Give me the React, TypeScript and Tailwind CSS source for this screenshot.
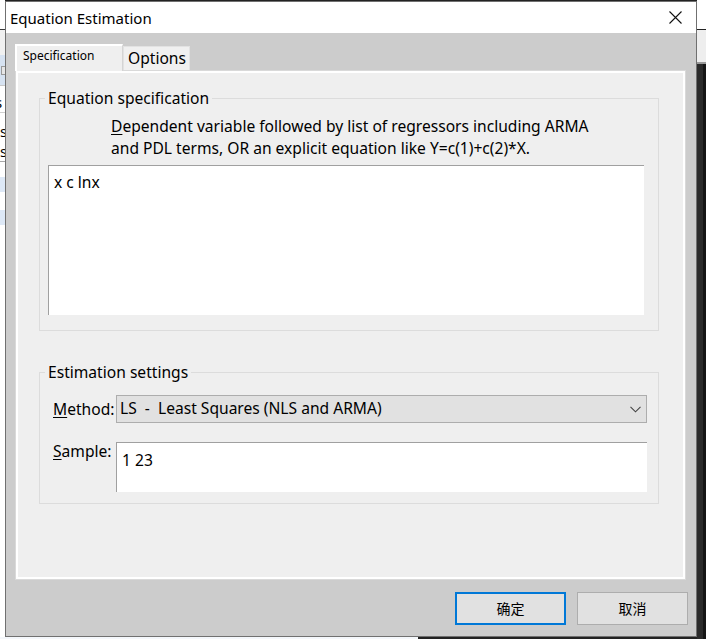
// Background windows peeking out on the left edge
function LeftBackdrop() {
    return (
        <div className="absolute left-0 top-0 w-[5px] h-[637px] bg-white overflow-hidden flex flex-col">
            <div className="h-[29px] bg-white" />
            <div className="h-[1px] bg-[#3a3a3a]" />
            <div className="h-[25px] bg-[#f0f0f0]" />
            <div className="h-[30px] bg-[#d6e2f1] pt-[11px]">
                <div className="ml-[1px] w-[8px] h-[9px] border border-[#9a9a9a] bg-[#e6e6e6]" />
            </div>
            <div className="h-[1px] bg-[#c8c8c8]" />
            <div className="h-[6px] bg-white" />
            <div className="h-[20px] -ml-[5px] text-[15px] leading-[20px] whitespace-nowrap">s</div>
            <div className="h-[1px] bg-[#d0d0d0]" />
            <div className="h-[8px] bg-white" />
            <div className="h-[20px] -ml-[9px] text-[15px] leading-[20px] whitespace-nowrap">os</div>
            <div className="h-[20px] -ml-[9px] text-[15px] leading-[20px] whitespace-nowrap">os</div>
            <div className="h-[1px] bg-[#a8a8a8]" />
            <div className="h-[15px] bg-white" />
            <div className="h-[15px] bg-[#dde8f6]" />
            <div className="h-[18px] bg-white" />
            <div className="h-[15px] bg-[#dde8f6]" />
            <div className="flex-1 bg-white" />
        </div>
    );
}

function RightBackdrop() {
    return (
        <div className="absolute left-[697px] top-0 w-[9px] h-[639px] flex flex-col">
            <div className="h-[29px] bg-white" />
            <div className="h-[1px] bg-[#222222]" />
            <div className="h-[32px] bg-[#eeeeee]" />
            <div className="h-[2px] bg-[#9a9a9a]" />
            <div className="flex-1 flex">
                <div className="w-[6px] bg-[#2b2b2b]" />
                <div className="flex-1 bg-[#161616]" />
            </div>
        </div>
    );
}

function GroupBox({ title, className, children }: { title: string; className: string; children: React.ReactNode }) {
    return (
        <div className={`relative w-[620px] border border-[#dcdcdc] ${className}`}>
            <div className="absolute -top-[11px] left-[5px] bg-[#efefef] px-[3px] text-[15.6px] leading-[20px]">{title}</div>
            {children}
        </div>
    );
}

export default function App() {
    return (
        <div className="relative w-[706px] h-[639px] overflow-hidden bg-[#222222] text-black font-['Noto_Sans','Noto_Sans_CJK_SC',sans-serif]">
            <LeftBackdrop />
            <RightBackdrop />
            <div className="absolute left-0 top-[637px] h-[2px] w-[418px] bg-[#f4f7fb]" />

            {/* Dialog window */}
            <div className="absolute left-[5px] top-[1px] w-[692px] h-[636px] border border-[#707070] bg-[#cccccc] flex flex-col">
                {/* Title bar */}
                <div className="h-[31px] bg-white flex items-center justify-between pl-[4px] pr-[14px]">
                    <span className="text-[15px] leading-[20px]">Equation Estimation</span>
                    <svg width="13" height="13" viewBox="0 0 13 13" className="text-[#111]">
                        <path d="M0.5 0.5 L12.5 12.5 M12.5 0.5 L0.5 12.5" stroke="currentColor" strokeWidth="1.1" fill="none" />
                    </svg>
                </div>

                <div className="flex-1 flex flex-col pl-[9px] pr-[8px] pt-[11px] pb-[10px]">
                    {/* Tabs */}
                    <div className="flex items-end h-[26px]">
                        <div className="h-[27px] w-[108px] -mb-[1px] relative z-10 bg-[#efefef] border-t-2 border-l-2 border-white border-r border-r-[#d4d4d4] pl-[6px] pt-[2px] text-[12px] leading-[16px]">
                            Specification
                        </div>
                        <div className="h-[24px] w-[67px] bg-[#f0f0f0] border border-b-0 border-[#e2e2e2] pl-[4px] pt-[1px] text-[15.6px] leading-[20px]">
                            Options
                        </div>
                    </div>

                    {/* Tab panel */}
                    <div className="w-[671px] h-[510px] border border-[#d9d9d9]">
                        <div className="h-full border-2 border-white bg-[#efefef] pl-[21px] pt-[25px]">
                            <GroupBox title="Equation specification" className="h-[233px] pt-[16px]">
                                <div className="pl-[71px] text-[15.6px] leading-[22px]">
                                    <div><span className="underline underline-offset-2">D</span>ependent variable followed by list of regressors including ARMA</div>
                                    <div>and PDL terms, OR an explicit equation like Y=c(1)+c(2)*X.</div>
                                </div>
                                <div className="ml-[8px] mt-[6px] w-[596px] h-[150px] bg-white border-t border-l border-[#a0a0a0] pl-[5px] pt-[5px] text-[15.6px] leading-[22px]">
                                    x c lnx
                                </div>
                            </GroupBox>

                            <GroupBox title="Estimation settings" className="mt-[41px] h-[132px] pt-[22px] pl-[13px]">
                                <div className="flex items-center">
                                    <div className="w-[63px] text-[15.6px] leading-[20px] whitespace-nowrap">
                                        <span className="underline underline-offset-2">M</span>ethod:
                                    </div>
                                    <div className="w-[531px] h-[28px] border border-[#adadad] bg-[#e1e1e1] flex items-center justify-between pl-[3px] pr-[5px] text-[15.6px]">
                                        <span className="whitespace-pre">LS  -  Least Squares (NLS and ARMA)</span>
                                        <svg width="11" height="7" viewBox="0 0 11 7" className="text-[#444]">
                                            <path d="M0.5 0.8 L5.5 5.8 L10.5 0.8" stroke="currentColor" strokeWidth="1.1" fill="none" />
                                        </svg>
                                    </div>
                                </div>
                                <div className="mt-[19px] flex items-start">
                                    <div className="w-[63px] -mt-[1px] text-[15.6px] leading-[20px] whitespace-nowrap">
                                        <span className="underline underline-offset-2">S</span>ample:
                                    </div>
                                    <div className="w-[531px] h-[50px] bg-white border-t border-l border-[#a0a0a0] pl-[5px] pt-[6px] text-[15.6px] leading-[22px]">
                                        1 23
                                    </div>
                                </div>
                            </GroupBox>
                        </div>
                    </div>

                    {/* Buttons */}
                    <div className="mt-[12px] flex justify-end gap-[11px]">
                        <button className="w-[111px] h-[33px] border-2 border-[#0078d7] bg-[#e1e1e1] text-[14px]">确定</button>
                        <button className="w-[111px] h-[33px] border border-[#adadad] bg-[#e1e1e1] text-[14px]">取消</button>
                    </div>
                </div>
            </div>
        </div>
    );
}
